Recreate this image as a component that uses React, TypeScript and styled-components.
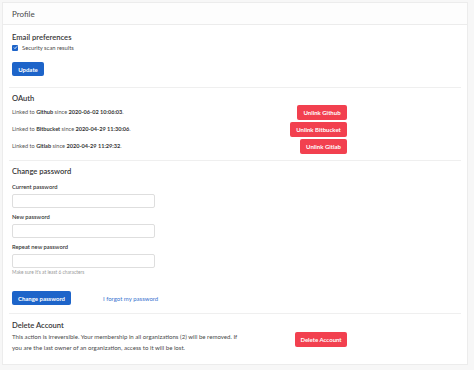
import React from 'react';
import styled, {createGlobalStyle} from 'styled-components';

const Global = createGlobalStyle`
  body {
    margin: 0;
    background: #f7f7f7;
    font-family: Lato, "Liberation Sans", sans-serif;
    color: #4a4a4a;
  }
`

const Card = styled.div`
  margin: 2px 4px 0 2px;
  width: 466px;
  height: 363px;
  background: #fff;
  border: 1px solid #ececec;
  box-sizing: border-box;
`

const CardHeader = styled.div`
  height: 21px;
  display: flex;
  align-items: center;
  padding-left: 9px;
  font-size: 8px;
  color: #4a4a4a;
  border-bottom: 1px solid #ececec;
  background: #fdfdfd;
`

const Section = styled.div<{h?: number; top: number}>`
  margin: 0 6px;
  padding: ${p => p.top}px 3px 0;
  height: ${p => p.h ? `${p.h}px` : 'auto'};
  box-sizing: border-box;
  border-bottom: ${p => p.h ? '1px solid #efefef' : 'none'};
`

const Title = styled.div`
  font-size: 7.6px;
  font-weight: 600;
  color: #363636;
  line-height: 11px;
`

const CheckRow = styled.label`
  display: flex;
  align-items: center;
  gap: 4px;
  font-size: 5.8px;
  color: #4a4a4a;
  margin: 1px 0 11px;
`

const Check = styled.span`
  width: 6px;
  height: 6px;
  border-radius: 1px;
  background: #1d64c9;
  display: flex;
  align-items: center;
  justify-content: center;
`

const Button = styled.button<{color: string; w: number; tall?: boolean}>`
  width: ${p => p.w}px;
  height: ${p => p.tall ? 15 : 14}px;
  padding: 0;
  border: none;
  border-radius: 2px;
  background: ${p => p.color};
  color: #fff;
  font-family: Lato, "Liberation Sans", sans-serif;
  font-size: 6px;
  font-weight: 700;
  display: flex;
  align-items: center;
  justify-content: center;
  white-space: nowrap;
`

const LinkList = styled.div`
  display: flex;
  flex-direction: column;
  gap: 2px;
  margin-top: 1px;
`

const Row = styled.div<{left: number}>`
  display: grid;
  grid-template-columns: ${p => p.left}px 1fr;
  width: 335px;
  align-items: start;
`

const LinkedText = styled.div`
  font-size: 5.6px;
  color: #555;
  padding-top: 3px;
  b {
    color: #363636;
    font-weight: 700;
  }
`

const RightCell = styled.div<{pad?: number}>`
  display: flex;
  justify-content: flex-end;
  padding-top: ${p => p.pad ?? 0}px;
`

const Form = styled.div`
  display: flex;
  flex-direction: column;
  gap: 4px;
  margin-top: 5px;
`

const Field = styled.div`
  display: flex;
  flex-direction: column;
  gap: 3px;
`

const Label = styled.div`
  font-size: 5.8px;
  font-weight: 600;
  color: #363636;
  line-height: 9px;
`

const Input = styled.div`
  width: 143px;
  height: 14px;
  border: 1px solid #dedede;
  border-radius: 2px;
  box-sizing: border-box;
  background: #fff;
`

const Hint = styled.div`
  font-size: 4.8px;
  color: #9a9a9a;
  line-height: 8px;
  margin-top: -4px;
`

const ActionRow = styled.div`
  display: flex;
  align-items: center;
  gap: 32px;
  margin-top: 15px;
`

const TextLink = styled.a`
  font-size: 6px;
  color: #3a74cf;
`

const Para = styled.div`
  font-size: 6.1px;
  line-height: 11px;
  color: #4a4a4a;
`

const links = [
  {name: 'Github', date: '2020-06-02 10:06:03', w: 50},
  {name: 'Bitbucket', date: '2020-04-29 11:30:06', w: 57},
  {name: 'Gitlab', date: '2020-04-29 11:29:32', w: 47},
]

const fields = ['Current password', 'New password', 'Repeat new password']

const RED = '#f2404f'
const BLUE = '#1d64c9'

export default function App() {
  return (
    <>
      <Global/>
      <Card>
        <CardHeader>Profile</CardHeader>
        <Section h={63} top={7}>
          <Title>Email preferences</Title>
          <CheckRow>
            <Check>
              <svg width="5" height="5" viewBox="0 0 10 10">
                <path d="M2 5.2l2 2 4-4.4" stroke="#fff" strokeWidth="1.8" fill="none"/>
              </svg>
            </Check>
            Security scan results
          </CheckRow>
          <Button color={BLUE} w={32}>Update</Button>
        </Section>
        <Section h={73} top={5}>
          <Title>OAuth</Title>
          <LinkList>
            {links.map(l => (
              <Row key={l.name} left={225}>
                <LinkedText>Linked to <b>{l.name}</b> since <b>{l.date}</b>.</LinkedText>
                <RightCell>
                  <Button color={RED} w={l.w} tall>Unlink {l.name}</Button>
                </RightCell>
              </Row>
            ))}
          </LinkList>
        </Section>
        <Section h={153} top={5}>
          <Title>Change password</Title>
          <Form>
            {fields.map(f => (
              <Field key={f}>
                <Label>{f}</Label>
                <Input/>
              </Field>
            ))}
            <Hint>Make sure it's at least 6 characters</Hint>
          </Form>
          <ActionRow>
            <Button color={BLUE} w={59}>Change password</Button>
            <TextLink>I forgot my password</TextLink>
          </ActionRow>
        </Section>
        <Section top={6}>
          <Title>Delete Account</Title>
          <Row left={232}>
            <Para>This action is irreversible. Your membership in all organizations (2) will be removed. If you are the last owner of an organization, access to it will be lost.</Para>
            <RightCell pad={1}>
              <Button color={RED} w={52} tall>Delete Account</Button>
            </RightCell>
          </Row>
        </Section>
      </Card>
    </>
  );
}
